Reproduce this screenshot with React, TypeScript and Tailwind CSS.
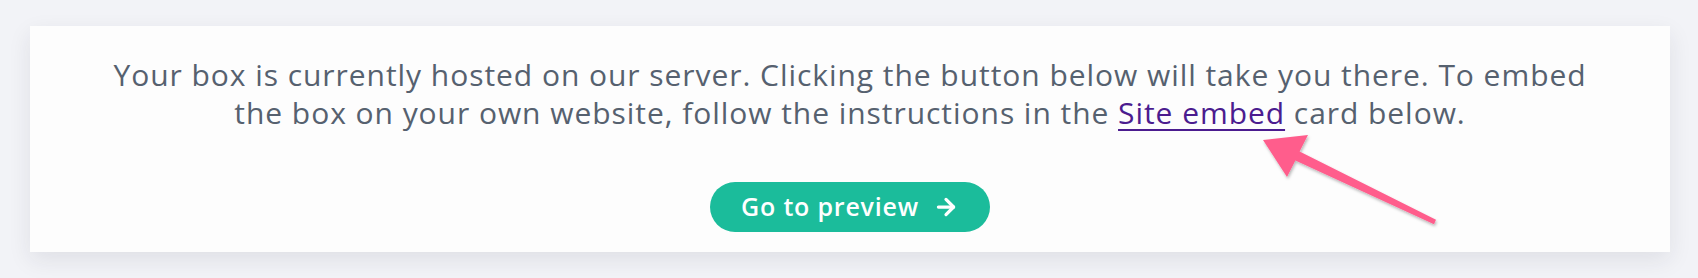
import React from 'react';
import { ArrowRight } from 'lucide-react';

const PointerArrow: React.FC = () => (
  <svg
    className="absolute inset-0 pointer-events-none"
    width="100%"
    height="100%"
    viewBox="0 0 1640 226"
    preserveAspectRatio="none"
  >
    <defs>
      <filter id="arrow-shadow" x="-10%" y="-10%" width="120%" height="130%">
        <feDropShadow dx="1" dy="2" stdDeviation="1.6" floodColor="#000" floodOpacity="0.28" />
      </filter>
    </defs>
    <polygon
      points="1233,114 1278,109 1269.6,125.5 1406,193.7 1404,198.3 1265.4,134.5 1257,151"
      fill="#ff5d8c"
      strokeLinejoin="round"
      filter="url(#arrow-shadow)"
    />
  </svg>
);

export default function App() {
  return (
    <div className="min-h-[278px] w-full bg-[#f2f3f7] pt-[26px] pl-[30px] pr-[28px] pb-[26px]">
      <div className="relative bg-[#fdfdfd] h-[226px] shadow-[0_8px_22px_rgba(30,35,60,0.09)] flex flex-col items-center pt-[30px]">
        <p
          className="text-center text-[30px] leading-[38px] tracking-[0.95px] text-[#56616f] whitespace-nowrap"
          style={{ fontFamily: '"Open Sans", sans-serif' }}
        >
          Your box is currently hosted on our server. Clicking the button below will take you there. To embed
          <br />
          the box on your own website, follow the instructions in the{' '}
          <a href="#" className="text-[#4b1c8f] underline underline-offset-[5px] decoration-[2px]">
            Site embed
          </a>{' '}
          card below.
        </p>

        <button
          className="mt-[50px] h-[50px] w-[280px] rounded-full bg-[#1bbc9b] text-white flex items-center justify-center gap-[14px] text-[25px] tracking-[0.8px] font-semibold"
          style={{ fontFamily: '"Open Sans", sans-serif' }}
        >
          <span>Go to preview</span>
          <ArrowRight size={26} strokeWidth={3} />
        </button>

        <PointerArrow />
      </div>
    </div>
  );
}
